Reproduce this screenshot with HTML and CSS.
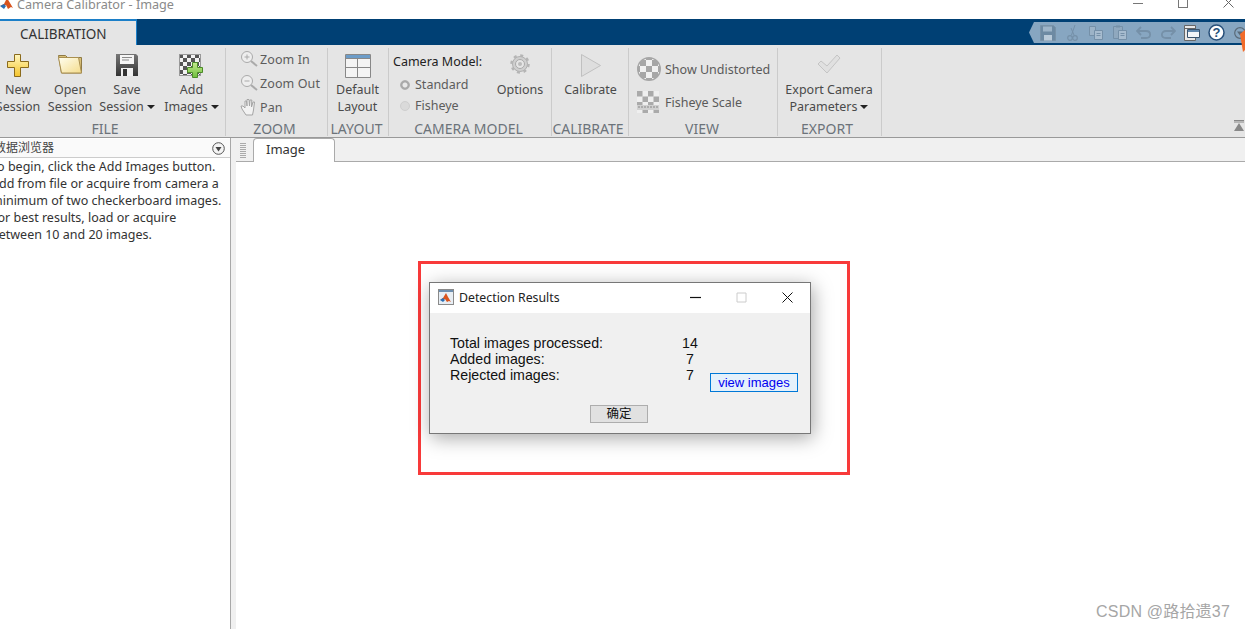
FILE: index.html
```html
<!DOCTYPE html>
<html lang="en">
<head>
<meta charset="utf-8">
<title>Camera Calibrator - Image</title>
<link rel="stylesheet" href="styles.css">
</head>
<body>
<div class="app">
  <header class="titlebar">
    <div class="title-left">
      <svg class="title-logo" width="14" height="14" viewBox="0 0 14 14"><path d="M0 9l4-2 3-6 3 5 3 5-2-1-3 2-2-4z" fill="#d9541e"/><path d="M0 9l4-2 2 2-2 3z" fill="#2a6fb5"/></svg>
      <span class="title-text">Camera Calibrator - Image</span>
    </div>
    <div class="win-controls">
      <span class="win-min"></span>
      <span class="win-max"></span>
      <svg class="win-close" width="11" height="11" viewBox="0 0 11 11"><path d="M.5.5l10 10M10.5.5l-10 10" stroke="#666" fill="none"/></svg>
    </div>
  </header>

  <nav class="tabbar">
    <div class="ribbon-tab">CALIBRATION</div>
    <div class="qat">
      <svg width="16" height="16" viewBox="0 0 16 16"><path d="M.5.5h13l2 2v13H.5z" fill="#6d8aa3" stroke="#7892a8"/><path d="M3 1.500h9v5H3z" fill="#9db4c8"/><path d="M4 10h8v5.500H4z" fill="#b9cad9"/></svg>
      <svg width="11" height="16" viewBox="0 0 11 16"><path d="M8 0L4.500 10M4 3l3 7" stroke="#7590a8" fill="none"/><circle cx="3" cy="13" r="2.300" fill="none" stroke="#7590a8" stroke-width="1.200"/><circle cx="8" cy="13" r="2.300" fill="none" stroke="#7590a8" stroke-width="1.200"/></svg>
      <svg width="14" height="14" viewBox="0 0 14 14"><path d="M.5.500h6v9h-6z" fill="#9cb3c7" stroke="#7590a8"/><path d="M5.500 4.500h8v9h-8z" fill="#a7bccf" stroke="#7590a8"/><path d="M7.500 7.500h4M7.500 9.500h4" stroke="#7590a8"/></svg>
      <svg width="14" height="15" viewBox="0 0 14 15"><path d="M.5 1.500h9v12h-9z" fill="#8fa8be" stroke="#7590a8"/><path d="M3 .5h4v2H3z" fill="#7590a8"/><path d="M5.500 5.500h8v9h-8z" fill="#a7bccf" stroke="#7590a8"/><path d="M7.500 8.500h4M7.500 10.500h4" stroke="#7590a8"/></svg>
      <svg width="16" height="13" viewBox="0 0 16 13"><path d="M5 1L1 5l4 4M1 5h9c5.500 0 5.500 7 0 7H5" fill="none" stroke="#7590a8" stroke-width="1.800"/></svg>
      <svg width="16" height="13" viewBox="0 0 16 13"><path d="M11 1l4 4-4 4M15 5H6c-5.500 0-5.500 7 0 7h5" fill="none" stroke="#7590a8" stroke-width="1.800"/></svg>
      <svg width="16" height="16" viewBox="0 0 16 16"><path d="M.5.5h11v15H.5z" fill="#e8e8e8" stroke="#666"/><path d="M.5 3.500h11" stroke="#666"/><path d="M3.500 4.500h12v8h-12z" fill="#f2f5f8" stroke="#38536d"/><path d="M4 5h11v2H4z" fill="#5f87ad"/></svg>
      <svg width="17" height="17" viewBox="0 0 17 17"><circle cx="8.500" cy="8.500" r="7.500" fill="#fff" stroke="#28507a" stroke-width="1.500"/><text class="help-mark" x="8.500" y="13" text-anchor="middle">?</text></svg>
      <svg width="12" height="12" viewBox="0 0 12 12"><circle cx="6" cy="6" r="5.300" fill="none" stroke="#5a6a78" stroke-width="1.200"/><path d="M3 4.500h6L6 8.500z" fill="#5a6a78"/></svg>
    </div>
  </nav>

  <section class="ribbon">
    <div class="group group-file">
      <div class="group-body">
        <div class="big big-new">
          <div class="big-icon"><svg width="22" height="23" viewBox="0 0 22 23"><defs><linearGradient id="gPlus" x1="0" y1="0" x2="0" y2="1"><stop offset="0" stop-color="#fff7c0"/><stop offset="1" stop-color="#f5c42c"/></linearGradient></defs><path d="M7.500 .5h6v7h8v6h-8v9h-6v-9h-7v-6h7z" fill="url(#gPlus)" stroke="#8a6a1c"/></svg></div>
          <div class="big-label">New<br>Session</div>
        </div>
        <div class="big big-open">
          <div class="big-icon"><svg width="24" height="20" viewBox="0 0 24 20"><defs><linearGradient id="gFolder" x1="0" y1="0" x2="1" y2="1"><stop offset="0" stop-color="#fffef0"/><stop offset="1" stop-color="#f4dc8c"/></linearGradient></defs><path d="M.5 1.500h7l2 2h14v15.500h-20z" fill="#d8c078" stroke="#8f7a45"/><path d="M.5 3.500h20l3 15.500h-20z" fill="url(#gFolder)" stroke="#a98f50"/></svg></div>
          <div class="big-label">Open<br>Session</div>
        </div>
        <div class="big big-save">
          <div class="big-icon"><svg width="22" height="22" viewBox="0 0 22 22"><defs><linearGradient id="gDisk" x1="0" y1="0" x2="0" y2="1"><stop offset="0" stop-color="#777"/><stop offset="1" stop-color="#333"/></linearGradient></defs><path d="M0 0h20l2 2v20H0z" fill="url(#gDisk)"/><path d="M4 1h14v9H4z" fill="#f5f5f5"/><path d="M6 3.500h10M6 6h7" stroke="#8a8a8a"/><path d="M5 14h12v8H5z" fill="#f0f0f0"/><path d="M7 15h4v7H7z" fill="#333"/></svg></div>
          <div class="big-label">Save<br>Session<i class="caret"></i></div>
        </div>
        <div class="big big-add">
          <div class="big-icon"><svg width="24" height="24" viewBox="0 0 24 24"><defs><pattern id="pAdd" width="8" height="8" patternUnits="userSpaceOnUse"><rect width="8" height="8" fill="#f2f2f2"/><rect width="4" height="4" fill="#555"/><rect x="4" y="4" width="4" height="4" fill="#555"/></pattern><linearGradient id="gGreen" x1="0" y1="0" x2="0" y2="1"><stop offset="0" stop-color="#c4eb8e"/><stop offset="1" stop-color="#6fbe3c"/></linearGradient></defs><rect x=".5" y=".5" width="21" height="21" fill="url(#pAdd)" stroke="#999"/><path d="M13.500 8.500h5v5h5v5h-5v5h-5v-5h-5v-5h5z" fill="url(#gGreen)" stroke="#4b8a28"/></svg></div>
          <div class="big-label add-label">Add<br>Images<i class="caret"></i></div>
        </div>
      </div>
      <div class="group-label">FILE</div>
    </div>

    <div class="group group-zoom">
      <div class="group-body rows">
        <div class="row"><svg width="20" height="18" viewBox="0 0 20 18"><circle cx="7" cy="7" r="5.500" fill="#eee" stroke="#aaa"/><path d="M11 11l6 5" stroke="#aaa" stroke-width="2"/><path d="M4.500 7h5M7 4.500v5" stroke="#aaa"/></svg><span>Zoom In</span></div>
        <div class="row"><svg width="20" height="18" viewBox="0 0 20 18"><circle cx="7" cy="7" r="5.500" fill="#eee" stroke="#aaa"/><path d="M11 11l6 5" stroke="#aaa" stroke-width="2"/><path d="M4.500 7h5" stroke="#aaa"/></svg><span>Zoom Out</span></div>
        <div class="row"><svg width="20" height="18" viewBox="0 0 20 18"><path d="M6 17l-4-6-1-3 2 0 2 2V3l1.500 0 .5 5V1.500h2L9.500 8l.5-6h1.800l-.3 7 1.500-5h1.500L13.500 12 12.500 17z" fill="#f2f2f2" stroke="#a5a5a5"/></svg><span>Pan</span></div>
      </div>
      <div class="group-label">ZOOM</div>
    </div>

    <div class="group group-layout">
      <div class="group-body">
        <div class="big big-layout">
          <div class="big-icon"><svg width="26" height="24" viewBox="0 0 26 24"><path d="M.5.5h25v23H.5z" fill="#f4f4f4" stroke="#888"/><path d="M1 1h24v3H1z" fill="#6c9cc8"/><path d="M.5 4.500h25M.5 13.500h25M12.500 4.500v19" stroke="#888" fill="none"/></svg></div>
          <div class="big-label">Default<br>Layout</div>
        </div>
      </div>
      <div class="group-label">LAYOUT</div>
    </div>

    <div class="group group-camera">
      <div class="group-body">
        <div class="camera-options">
          <div class="camera-title">Camera Model:</div>
          <div class="radio-row"><i class="radio radio-on"></i><span>Standard</span></div>
          <div class="radio-row"><i class="radio"></i><span>Fisheye</span></div>
        </div>
        <div class="big big-options">
          <div class="big-icon"><svg width="20" height="20" viewBox="0 0 20 20"><circle cx="10" cy="10" r="7.500" fill="#cfcfcf" stroke="#b0b0b0" stroke-width="1"/><circle cx="10" cy="10" r="8.500" fill="none" stroke="#b5b5b5" stroke-width="2.500" stroke-dasharray="3 3.670"/><circle cx="10" cy="10" r="4.500" fill="#e5e5e5" stroke="#aaa"/><circle cx="10" cy="10" r="2" fill="#bbb"/></svg></div>
          <div class="big-label">Options</div>
        </div>
      </div>
      <div class="group-label">CAMERA MODEL</div>
    </div>

    <div class="group group-calibrate">
      <div class="group-body">
        <div class="big big-calibrate">
          <div class="big-icon"><svg width="20" height="23" viewBox="0 0 20 23"><path d="M.5.5l19 11-19 11z" fill="#dedede" stroke="#c0c0c0"/></svg></div>
          <div class="big-label">Calibrate</div>
        </div>
      </div>
      <div class="group-label">CALIBRATE</div>
    </div>

    <div class="group group-view">
      <div class="group-body view-rows">
        <div class="view-row view-row-top"><svg width="24" height="24" viewBox="0 0 24 24"><defs><pattern id="pBall" width="12" height="12" patternUnits="userSpaceOnUse" patternTransform="translate(3 3)"><rect width="12" height="12" fill="#f0f0f0"/><rect width="6" height="6" fill="#a6a6a6"/><rect x="6" y="6" width="6" height="6" fill="#a6a6a6"/></pattern></defs><circle cx="12" cy="12" r="11.300" fill="url(#pBall)" stroke="#a6a6a6" stroke-width="1.400"/></svg><span>Show Undistorted</span></div>
        <div class="view-row"><svg width="22" height="22" viewBox="0 0 22 22"><defs><pattern id="pScale" width="11" height="11" patternUnits="userSpaceOnUse"><rect width="11" height="11" fill="#efefef"/><rect width="5.500" height="5.500" fill="#aaa"/><rect x="5.500" y="5.500" width="5.500" height="5.500" fill="#aaa"/></pattern></defs><rect width="22" height="22" fill="url(#pScale)"/><rect y="14" width="22" height="5" fill="#d0d0d0"/><path d="M2 15v2M5 15v2M8 15v2M11 15v2M14 15v2M17 15v2M20 15v2" stroke="#888"/></svg><span>Fisheye Scale</span></div>
      </div>
      <div class="group-label">VIEW</div>
    </div>

    <div class="group group-export">
      <div class="group-body">
        <div class="big big-export">
          <div class="big-icon"><svg width="24" height="20" viewBox="0 0 24 20"><path d="M1 10l3-3 6 5L20 1l3 3-13 15z" fill="#e0e0e0" stroke="#c4c4c4"/></svg></div>
          <div class="big-label">Export Camera<br>Parameters<i class="caret"></i></div>
        </div>
      </div>
      <div class="group-label">EXPORT</div>
    </div>

    <div class="ribbon-fill">
      <svg width="10" height="11" viewBox="0 0 10 11"><path d="M0 .5h10" stroke="#888"/><path d="M0 2h10" stroke="#888"/><path d="M5 3l5 8H0z" fill="#888"/></svg>
    </div>
  </section>

  <main class="workspace">
    <aside class="browser">
      <div class="browser-head">
        <span class="browser-title">数据浏览器</span>
        <svg width="13" height="13" viewBox="0 0 13 13"><circle cx="6.500" cy="6.500" r="5.800" fill="#f4f4f4" stroke="#555"/><path d="M3.500 5h6l-3 4.500z" fill="#444"/></svg>
      </div>
      <p class="browser-text">To begin, click the Add Images button.<br>Add from file or acquire from camera a<br>minimum of two checkerboard images.<br>For best results, load or acquire<br>between 10 and 20 images.</p>
    </aside>
    <div class="splitter"></div>
    <div class="doc-area">
      <div class="doc-strip">
        <div class="grip"></div>
        <div class="doc-tab">Image</div>
      </div>
      <div class="doc-body"></div>
    </div>
  </main>
</div>

<svg class="cursor-mark" width="5" height="20" viewBox="0 0 5 20"><path d="M0 0l5-4v20L3 18z" fill="#f26b2a"/></svg>

<div class="annotation"></div>

<div class="dialog">
  <div class="dialog-title">
    <svg class="dialog-logo" width="16" height="16" viewBox="0 0 16 16"><rect x=".5" y=".5" width="15" height="15" fill="#e8eef4" stroke="#8a8a8a"/><path d="M1 2h14" stroke="#6d8fb0" stroke-width="2"/><path d="M2 11l3-2 3-5 2 4 3 5-2-1-2 1-2-3z" fill="#d9541e"/><path d="M2 11l3-2 2 2-2 2z" fill="#2a6fb5"/></svg>
    <span class="dialog-name">Detection Results</span>
    <div class="dialog-controls">
      <svg width="11" height="11" viewBox="0 0 11 11"><path d="M0 5.500h11" stroke="#111" stroke-width="1.200"/></svg>
      <svg width="11" height="11" viewBox="0 0 11 11"><path d="M1 1h9v9H1z" fill="none" stroke="#ccc"/></svg>
      <svg width="11" height="11" viewBox="0 0 11 11"><path d="M.5.500l10 10M10.500.500l-10 10" stroke="#111" fill="none"/></svg>
    </div>
  </div>
  <div class="dialog-body">
    <div class="stats">
      <span class="stat-name">Total images processed:</span><span class="stat-num">14</span>
      <span class="stat-name">Added images:</span><span class="stat-num">7</span>
      <span class="stat-name">Rejected images:</span><span class="stat-num">7</span>
      <button class="view-btn">view images</button>
    </div>
    <button class="ok-btn">确定</button>
  </div>
</div>

<div class="watermark">CSDN @路拾遗37</div>
</body>
</html>
```

FILE: styles.css
```css
* { box-sizing: border-box; }
html, body { margin: 0; height: 100%; overflow: hidden; background: #fff; }
body { width: 1245px; height: 629px; position: relative; font-family: "Noto Sans", "Noto Sans CJK SC", sans-serif; font-size: 13px; color: #444; }
svg { display: block; flex: none; }

.app { display: flex; flex-direction: column; height: 629px; }

.titlebar { height: 19px; flex: none; display: flex; justify-content: space-between; align-items: flex-start; background: #fff; overflow: hidden; }
.title-left { display: flex; gap: 3px; margin-top: -5px; align-items: center; }
.title-logo { margin-top: -1px; }
.title-text { font-size: 12.650px; line-height: 18px; color: #8a8a8a; }
.win-controls { display: flex; align-items: flex-start; margin-right: 11px; gap: 35px; }
.win-min { width: 10px; height: 1px; background: #777; margin-top: 3px; }
.win-max { width: 10px; height: 8px; border: 1px solid #777; border-top: 0; }
.win-close { margin-top: -3px; }

.tabbar { height: 26px; flex: none; background: #004074; display: flex; justify-content: space-between; }
.ribbon-tab { width: 137px; background: #e5e5e5; border-top: 2px solid #1c7fc8; border-right: 1px solid #1c7fc8; padding: 1px 0 0 20px; font-size: 13.500px; line-height: 25px; color: #333; }
.qat { width: 216px; height: 21px; margin-top: 3px; background: #87a6c1; clip-path: polygon(5px 0, 100% 0, 100% 100%, 5px 100%, 0 50%); display: grid; grid-auto-flow: column; grid-auto-columns: 24px; align-items: center; justify-items: center; justify-content: start; padding-left: 7px; overflow: hidden; }
.help-mark { font-family: "Liberation Sans", sans-serif; font-size: 13px; font-weight: 700; fill: #28507a; }

.ribbon { height: 93px; flex: none; background: #e5e5e5; border-bottom: 1px solid #999; display: flex; padding: 3px 0 1px; color: #4a4a4a; font-size: 12.500px; }
.group { flex: none; display: flex; flex-direction: column; border-right: 1px solid #cbcbcb; }
.group-body { flex: 1; display: flex; min-height: 0; }
.group-label { height: 17px; flex: none; text-align: center; font-size: 14px; line-height: 19px; color: #6c737a; }
.group-file { width: 234px; margin-left: -8px; }
.group-zoom { width: 102px; }
.group-layout { width: 61px; }
.group-camera { width: 163px; }
.group-calibrate { width: 77px; }
.group-view { width: 149px; }
.group-export { width: 104px; }
.ribbon-fill { flex: 1; display: flex; justify-content: flex-end; align-items: flex-end; padding: 0 1px 5px 0; }

.group-file .group-label { padding-right: 7px; }
.group-zoom .group-label { padding-right: 4px; }
.group-layout .group-label { padding-right: 3px; }
.group-camera .group-label { padding-right: 3px; }
.group-calibrate .group-label { padding-right: 4px; }
.group-view .group-label { padding-right: 2px; }
.group-export .group-label { padding-right: 5px; }
.big { display: flex; flex-direction: column; align-items: center; text-align: center; flex: none; }
.big-icon { height: 33px; padding-top: 6px; }
.big-label { line-height: 17px; white-space: nowrap; }
.add-label { padding-left: 1px; }
.big-new { width: 52px; }
.big-open { width: 52px; }
.big-save { width: 62px; }
.big-add { width: 66px; }
.big-layout { width: 100%; padding-right: 1px; }
.big-options { flex: 1; }
.big-calibrate { width: 100%; padding-left: 1px; }
.big-export { width: 100%; padding-right: 1px; }
.caret { display: inline-block; width: 0; height: 0; border: 4px solid transparent; border-top-color: #222; border-bottom: 0; margin-left: 3px; vertical-align: 2px; }

.rows { flex-direction: column; padding-left: 14px; margin-top: -1px; }
.row { height: 24px; flex: none; display: flex; align-items: center; color: #5c5c5c; letter-spacing: .1px; }

.camera-options { width: 100px; padding-left: 4px; }
.camera-title { height: 27px; line-height: 28px; color: #222; }
.radio-row { height: 21px; display: flex; align-items: center; padding-left: 7px; gap: 5px; color: #5c5c5c; position: relative; top: -1px; }
.radio { width: 10px; height: 10px; border-radius: 50%; background: #dadada; border: 1px solid #cfcfcf; }
.radio-on { background: radial-gradient(circle, #e8e8e8 0 2px, #a8a8a8 3px); border-color: #b0b0b0; }

.view-rows { flex-direction: column; padding-left: 8px; }
.view-row { height: 24px; flex: none; display: flex; align-items: center; gap: 6px; color: #5a5a5a; }
.view-row-top { height: 42px; gap: 4px; }

.workspace { flex: 1; display: flex; min-height: 0; }
.browser { width: 231px; flex: none; background: #fff; border-right: 1px solid #a8a8a8; overflow: hidden; }
.browser-head { height: 19px; background: #fafafa; border-bottom: 1px solid #ccc; display: flex; justify-content: space-between; align-items: center; padding-right: 5px; margin-top: 1px; }
.browser-title { margin-left: -6px; font-size: 12px; line-height: 18px; color: #444; }
.browser-text { margin: 0 0 0 -9px; font-size: 12.500px; line-height: 17px; color: #333; white-space: nowrap; }
.splitter { width: 5px; flex: none; background: #f0f0f0; }
.doc-area { flex: 1; display: flex; flex-direction: column; min-width: 0; }
.doc-strip { height: 24px; flex: none; background: #f0f0f0; border-bottom: 1px solid #aaa; display: flex; align-items: flex-start; padding-left: 4px; }
.grip { width: 6px; height: 15px; margin-top: 5px; background: repeating-linear-gradient(to bottom, #aaa 0 1px, transparent 1px 2px); }
.doc-tab { width: 82px; height: 24px; margin-left: 7px; background: #fff; border: 1px solid #aaa; border-bottom: 0; border-radius: 4px 4px 0 0; padding-left: 12px; font-size: 13px; line-height: 21px; color: #333; }
.doc-body { flex: 1; background: #fff; }

.cursor-mark { position: absolute; left: 1240px; top: 34px; overflow: visible; }

.annotation { position: absolute; left: 418px; top: 261px; width: 432px; height: 214px; border: 3px solid #f83a3a; }

.dialog { position: absolute; left: 429px; top: 282px; width: 382px; height: 152px; border: 1px solid #777; background: #f0f0f0; box-shadow: 2px 4px 18px rgba(0,0,0,.35); display: flex; flex-direction: column; }
.dialog-title { height: 30px; flex: none; background: #fff; display: flex; align-items: center; padding: 0 0 2px 8px; }
.dialog-name { margin-left: 5px; font-size: 12.300px; color: #222; }
.dialog-controls { margin-left: auto; display: flex; gap: 35px; padding-right: 17px; }
.dialog-body { flex: 1; display: flex; flex-direction: column; align-items: center; padding-top: 22px; font-family: "Liberation Sans", sans-serif; font-size: 14.200px; color: #111; }
.stats { align-self: stretch; display: grid; grid-template-columns: 232px 16px 1fr; grid-auto-rows: 16px; line-height: 16px; padding-left: 20px; }
.stat-name { grid-column: 1; }
.stat-num { grid-column: 2; text-align: center; }
.view-btn { grid-column: 3; grid-row: 2 / 4; align-self: end; justify-self: end; width: 88px; height: 19px; margin: 0 12px -9px 0; padding: 0; border: 1px solid #0078d7; background: #e5f1fb; color: #0000f0; font: 13px/16px "Liberation Sans", sans-serif; }
.ok-btn { margin-top: 22px; margin-left: -2px; width: 58px; height: 18px; padding: 0; border: 1px solid #adadad; background: #e1e1e1; color: #111; font: 12.500px/16px "Liberation Sans", "Noto Sans CJK SC", sans-serif; }

.watermark { position: absolute; left: 1096px; top: 602px; font-family: "Liberation Sans", "Noto Sans CJK SC", sans-serif; font-size: 16px; letter-spacing: .2px; line-height: 20px; color: #a6a6a6; white-space: nowrap; }
```
